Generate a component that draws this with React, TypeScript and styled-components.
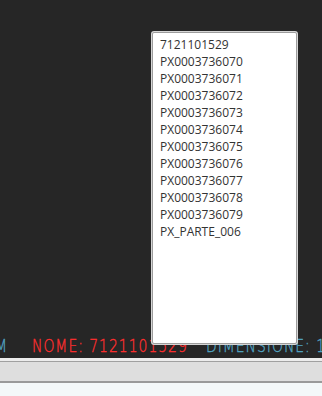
import React from "react";
import styled, { createGlobalStyle } from "styled-components";

const GlobalStyle = createGlobalStyle`
  html, body {
    margin: 0;
    padding: 0;
    background: #262626;
  }
  #root {
    height: 396px;
  }
`;

const Screen = styled.div`
  position: relative;
  height: 396px;
  display: flex;
  flex-direction: column;
  overflow: hidden;
`;

const Viewport = styled.div`
  height: 358px;
  flex-shrink: 0;
  background: #262626;
  display: flex;
  flex-direction: column;
  justify-content: flex-end;
`;

const StatusLine = styled.div`
  display: flex;
  align-items: flex-end;
  height: 22px;
  padding-bottom: 3px;
  white-space: nowrap;
  font-family: "DejaVu Sans", sans-serif;
  font-weight: 200;
  font-size: 17px;
  letter-spacing: 1.2px;
  line-height: 1;
`;

// each field holds its slot; the glyphs are squeezed like the CAD vector font
const Field = styled.span<{ $color: string; $width: number }>`
  display: inline-block;
  flex-shrink: 0;
  width: ${(p) => p.$width}px;
  color: ${(p) => p.$color};
  -webkit-text-stroke: 0.35px ${(p) => p.$color};
  transform: scaleX(0.82);
  transform-origin: left bottom;
`;

const Divider = styled.div<{ $color: string; $size: number }>`
  height: ${(p) => p.$size}px;
  flex-shrink: 0;
  background: ${(p) => p.$color};
`;

const Toolbar = styled.div`
  height: 19px;
  flex-shrink: 0;
  background: #dedede;
`;

const Footer = styled.div`
  flex: 1;
  background: #f4f8f9;
`;

const Dropdown = styled.ul`
  position: absolute;
  left: 152px;
  top: 32px;
  width: 145px;
  height: 312px;
  box-sizing: border-box;
  margin: 0;
  padding: 3px 0 0 7px;
  list-style: none;
  background: #fff;
  border: 1px solid #9c9c9c;
  border-radius: 2px;
  box-shadow: 0 0 0 1px #d6d6d6;
  font-family: "Open Sans", "Noto Sans", sans-serif;
  font-size: 12px;
  line-height: 17px;
  color: #333;
`;

const Option = styled.li`
  margin: 0;
`;

const options = [
  "7121101529",
  "PX0003736070",
  "PX0003736071",
  "PX0003736072",
  "PX0003736073",
  "PX0003736074",
  "PX0003736075",
  "PX0003736076",
  "PX0003736077",
  "PX0003736078",
  "PX0003736079",
  "PX_PARTE_006",
];

export default function App() {
  return (
    <Screen>
      <GlobalStyle />
      <Viewport>
        <StatusLine>
          <Field $color="#52a4c2" $width={37} style={{ marginLeft: -5 }}>
            M
          </Field>
          <Field $color="#ff2e2e" $width={174}>
            NOME: 7121101529
          </Field>
          <Field $color="#52a4c2" $width={130}>
            DIMENSIONE: 1
          </Field>
        </StatusLine>
      </Viewport>
      <Divider $color="#ececec" $size={3} />
      <Divider $color="#a0a0a0" $size={1} />
      <Toolbar />
      <Divider $color="#9a9a9a" $size={2} />
      <Footer />
      <Dropdown>
        {options.map((o) => (
          <Option key={o}>{o}</Option>
        ))}
      </Dropdown>
    </Screen>
  );
}
